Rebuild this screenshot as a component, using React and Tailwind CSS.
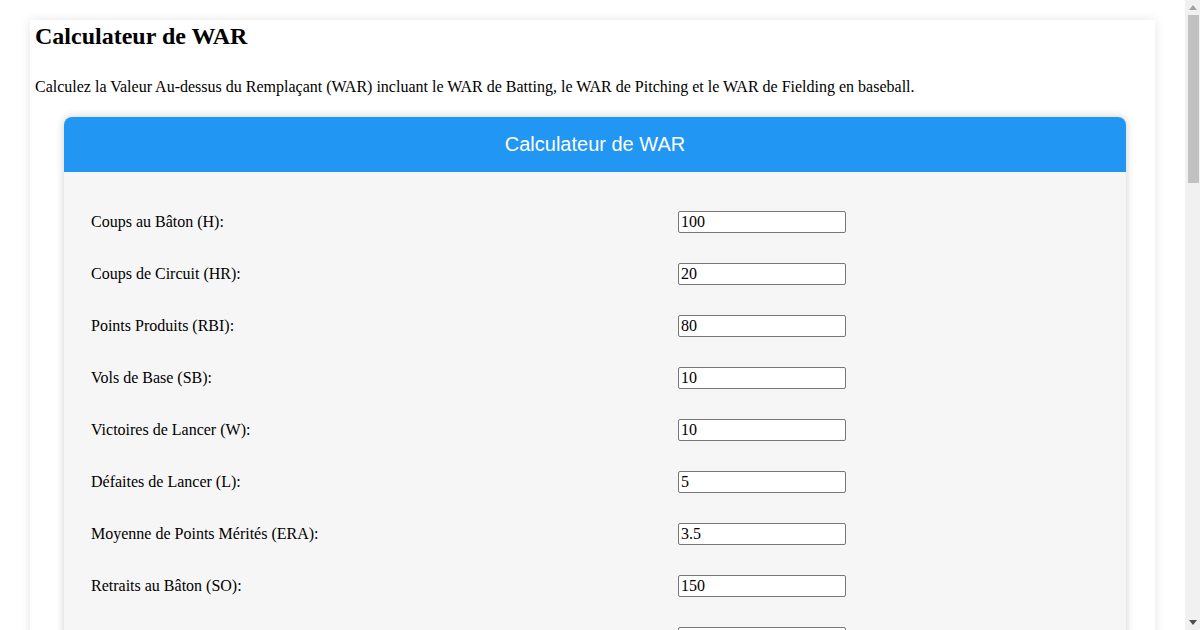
import React from 'react';

const fields = [
  { label: 'Coups au Bâton (H):', value: '100' },
  { label: 'Coups de Circuit (HR):', value: '20' },
  { label: 'Points Produits (RBI):', value: '80' },
  { label: 'Vols de Base (SB):', value: '10' },
  { label: 'Victoires de Lancer (W):', value: '10' },
  { label: 'Défaites de Lancer (L):', value: '5' },
  { label: 'Moyenne de Points Mérités (ERA):', value: '3.5' },
  { label: 'Retraits au Bâton (SO):', value: '150' },
  { label: 'Manches Lancées (IP):', value: '180' },
  { label: 'Retraits Défensifs (PO):', value: '250' },
  { label: 'Assistances (A):', value: '50' },
  { label: 'Erreurs (E):', value: '5' },
  { label: 'Matchs Joués (G):', value: '150' },
];

function FieldRow({ label, value }) {
  return (
    <div className="flex items-center h-[22px]">
      <label className="w-[587px] shrink-0">{label}</label>
      <input
        type="text"
        defaultValue={value}
        className="w-[168px] h-[22px] px-[2px] py-[1px] border border-[#767676] rounded-[2px] bg-white text-black text-[16px] font-['Liberation_Serif',serif] outline-none"
      />
    </div>
  );
}

// fake classic scrollbar, the page is taller than the window
function Scrollbar() {
  return (
    <div className="w-[15px] shrink-0 h-screen bg-[#f1f1f1] flex flex-col items-center">
      <div className="h-[15px] flex items-center justify-center">
        <svg width="8" height="5" viewBox="0 0 8 5">
          <path d="M4 0 L8 5 L0 5 Z" fill="#a3a3a3" />
        </svg>
      </div>
      <div className="w-[11px] ml-[2px] h-[168px] bg-[#c1c1c1]" />
      <div className="flex-1" />
      <div className="h-[15px] flex items-center justify-center">
        <svg width="8" height="5" viewBox="0 0 8 5">
          <path d="M0 0 L8 0 L4 5 Z" fill="#505050" />
        </svg>
      </div>
    </div>
  );
}

export default function App() {
  return (
    <div className="flex h-screen overflow-hidden bg-white font-['Liberation_Serif',serif] text-black text-[16px]">
      <div className="flex-1 min-w-0 h-screen overflow-hidden pt-[20px]">
        <div className="mx-[30px] bg-white pt-[3px] px-[5px] pb-[40px] shadow-[0_0_10px_rgba(0,0,0,0.1)]">
          <h1 className="text-[24px] font-bold leading-[27.6px] mb-[27px]">Calculateur de WAR</h1>
          <p className="leading-[18.4px]">
            Calculez la Valeur Au-dessus du Remplaçant (WAR) incluant le WAR de Batting, le WAR de Pitching et le WAR de Fielding en baseball.
          </p>

          <div className="mt-[21px] ml-[29px] w-[1062px] rounded-[8px] bg-[#f6f6f6] shadow-[0_0_8px_rgba(0,0,0,0.2)]">
            <div className="h-[55px] pb-[2px] flex items-center justify-center rounded-t-[8px] bg-[#2196f3] text-white text-[20px] font-['Liberation_Sans',Arial,sans-serif]">
              Calculateur de WAR
            </div>
            <div className="px-[27px] pt-[39px] pb-[40px] flex flex-col gap-[30px]">
              {fields.map((f) => (
                <FieldRow key={f.label} label={f.label} value={f.value} />
              ))}
              <div className="flex justify-center mt-[10px]">
                <button className="px-[24px] py-[10px] rounded-[4px] bg-[#2196f3] text-white text-[16px] font-['Liberation_Sans',Arial,sans-serif]">
                  Calculer le WAR
                </button>
              </div>
              <div className="flex flex-col gap-[12px]">
                <p>WAR de Batting : 3.20</p>
                <p>WAR de Pitching : 2.45</p>
                <p>WAR de Fielding : 0.80</p>
                <p className="font-bold">WAR Total : 6.45</p>
              </div>
            </div>
          </div>
        </div>
      </div>
      <Scrollbar />
    </div>
  );
}
